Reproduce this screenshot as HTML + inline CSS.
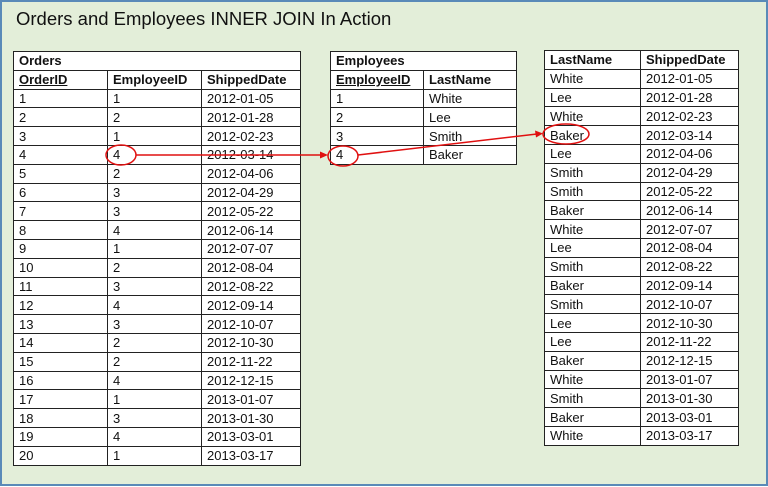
<!DOCTYPE html>
<html><head><style>
body{margin:0;width:768px;height:487px;overflow:hidden;background:#fff;font-family:"Liberation Sans",sans-serif;}
.frame{position:absolute;left:0;top:0;width:764px;height:482px;background:#e3eed9;border:2px solid #5a8ab8;}
.title{position:absolute;left:16px;top:8px;font-size:18.5px;color:#111;}
table{position:absolute;border-collapse:collapse;background:#fff;font-size:13px;color:#111;}
td{border:1px solid #222;padding:0 0 0 5px;height:17.8px;line-height:17px;white-space:nowrap;}
.h td{font-weight:bold;}
u{text-decoration:underline;}
svg{position:absolute;left:0;top:0;}
</style></head><body>
<div class="frame"></div>
<div class="title">Orders and Employees INNER JOIN In Action</div>
<table style="left:13px;top:51px;width:288px">
<tr class="h"><td colspan="3">Orders</td></tr>
<tr class="h"><td style="width:88px"><u>OrderID</u></td><td style="width:88px">EmployeeID</td><td>ShippedDate</td></tr>
<tr><td>1</td><td>1</td><td>2012-01-05</td></tr>
<tr><td>2</td><td>2</td><td>2012-01-28</td></tr>
<tr><td>3</td><td>1</td><td>2012-02-23</td></tr>
<tr><td>4</td><td>4</td><td>2012-03-14</td></tr>
<tr><td>5</td><td>2</td><td>2012-04-06</td></tr>
<tr><td>6</td><td>3</td><td>2012-04-29</td></tr>
<tr><td>7</td><td>3</td><td>2012-05-22</td></tr>
<tr><td>8</td><td>4</td><td>2012-06-14</td></tr>
<tr><td>9</td><td>1</td><td>2012-07-07</td></tr>
<tr><td>10</td><td>2</td><td>2012-08-04</td></tr>
<tr><td>11</td><td>3</td><td>2012-08-22</td></tr>
<tr><td>12</td><td>4</td><td>2012-09-14</td></tr>
<tr><td>13</td><td>3</td><td>2012-10-07</td></tr>
<tr><td>14</td><td>2</td><td>2012-10-30</td></tr>
<tr><td>15</td><td>2</td><td>2012-11-22</td></tr>
<tr><td>16</td><td>4</td><td>2012-12-15</td></tr>
<tr><td>17</td><td>1</td><td>2013-01-07</td></tr>
<tr><td>18</td><td>3</td><td>2013-01-30</td></tr>
<tr><td>19</td><td>4</td><td>2013-03-01</td></tr>
<tr><td>20</td><td>1</td><td>2013-03-17</td></tr>
</table>
<table style="left:330px;top:51px;width:187px">
<tr class="h"><td colspan="2">Employees</td></tr>
<tr class="h"><td style="width:87px"><u>EmployeeID</u></td><td>LastName</td></tr>
<tr><td>1</td><td>White</td></tr>
<tr><td>2</td><td>Lee</td></tr>
<tr><td>3</td><td>Smith</td></tr>
<tr><td>4</td><td>Baker</td></tr>
</table>
<table style="left:544px;top:50px;width:195px">
<tr class="h"><td style="width:90px">LastName</td><td>ShippedDate</td></tr>
<tr><td>White</td><td>2012-01-05</td></tr>
<tr><td>Lee</td><td>2012-01-28</td></tr>
<tr><td>White</td><td>2012-02-23</td></tr>
<tr><td>Baker</td><td>2012-03-14</td></tr>
<tr><td>Lee</td><td>2012-04-06</td></tr>
<tr><td>Smith</td><td>2012-04-29</td></tr>
<tr><td>Smith</td><td>2012-05-22</td></tr>
<tr><td>Baker</td><td>2012-06-14</td></tr>
<tr><td>White</td><td>2012-07-07</td></tr>
<tr><td>Lee</td><td>2012-08-04</td></tr>
<tr><td>Smith</td><td>2012-08-22</td></tr>
<tr><td>Baker</td><td>2012-09-14</td></tr>
<tr><td>Smith</td><td>2012-10-07</td></tr>
<tr><td>Lee</td><td>2012-10-30</td></tr>
<tr><td>Lee</td><td>2012-11-22</td></tr>
<tr><td>Baker</td><td>2012-12-15</td></tr>
<tr><td>White</td><td>2013-01-07</td></tr>
<tr><td>Smith</td><td>2013-01-30</td></tr>
<tr><td>Baker</td><td>2013-03-01</td></tr>
<tr><td>White</td><td>2013-03-17</td></tr>
</table>
<svg width="768" height="487">
<g stroke="#e01010" stroke-width="1.5" fill="none">
<ellipse cx="121" cy="155" rx="15" ry="10"/>
<line x1="136" y1="155" x2="322" y2="155"/>
<ellipse cx="343" cy="156" rx="15" ry="10"/>
<line x1="358" y1="155" x2="537" y2="134"/>
<ellipse cx="566" cy="134" rx="23" ry="10"/>
</g>
<polygon points="328,155 320,151.5 320,158.5" fill="#e01010"/>
<polygon points="543,133.5 535,130.5 536,137.5" fill="#e01010"/>
</svg>
</body></html>
